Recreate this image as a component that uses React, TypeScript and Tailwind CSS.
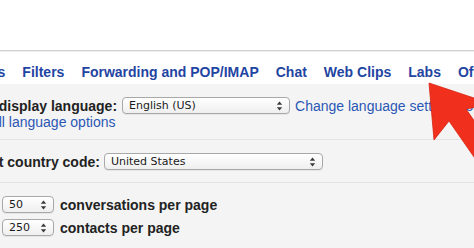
import React from "react";

function Arrows() {
  return (
    <svg width="7" height="10" viewBox="0 0 7 10" className="shrink-0">
      <path d="M3.5 0.5 L6.2 3.8 L0.8 3.8 Z" fill="#3a3a3a" />
      <path d="M3.5 9.5 L6.2 6.2 L0.8 6.2 Z" fill="#3a3a3a" />
    </svg>
  );
}

function Select({ value, className }: { value: string; className: string }) {
  return (
    <div
      className={
        "flex h-[17px] shrink-0 items-center justify-between rounded-[4px] border border-[#a8a8a8] bg-gradient-to-b from-white to-[#efefef] pl-[6px] pr-[6px] shadow-[0_1px_0_rgba(0,0,0,0.06)] " +
        className
      }
    >
      <span className="text-[11px] font-normal leading-[13px] text-[#1a1a1a] [font-family:'DejaVu_Sans',sans-serif]">
        {value}
      </span>
      <Arrows />
    </div>
  );
}

export default function App() {
  const tabs = ["Labels", "Filters", "Forwarding and POP/IMAP", "Chat", "Web Clips", "Labs", "Offline", "Themes"];
  return (
    <div className="relative h-[248px] w-[474px] overflow-hidden bg-white [font-family:'Liberation_Sans',Arial,sans-serif]">
      <div className="h-[50px] bg-white" />
      <div className="h-px bg-[#d2d2d2]" />
      <div className="h-px bg-[#ededed]" />
      <div className="ml-[-39px] flex h-[32px] gap-[17px] whitespace-nowrap bg-white pt-[12px] text-[14px] font-bold leading-[16px] text-[#1f45a2]">
        {tabs.map((t) => (
          <span key={t}>{t}</span>
        ))}
      </div>
      <div className="h-[164px] bg-[#f4f4f4]">
        <div className="border-b border-[#e3e3e3] pb-[9px] pt-[13px]">
          <div className="ml-[-44px] flex h-[17px] items-center whitespace-nowrap text-[14px] leading-[16px]">
            <span className="font-bold text-[#222]">Gmail display language:</span>
            <Select value="English (US)" className="ml-[5px] w-[168px]" />
            <span className="ml-[5px] text-[#2b57b4]">
              Change language settings for other Google products
            </span>
          </div>
          <div className="ml-[-48px] whitespace-nowrap text-[14px] leading-[16px] text-[#2b57b4]">
            Show all language options
          </div>
        </div>
        <div className="border-b border-[#e3e3e3] pb-[12px] pt-[13px]">
          <div className="ml-[-44px] flex h-[17px] items-center whitespace-nowrap text-[14px] leading-[16px]">
            <span className="font-bold text-[#222]">Default country code:</span>
            <Select value="United States" className="ml-[4px] w-[219px]" />
          </div>
        </div>
        <div className="flex flex-col gap-[6px] pt-[13px]">
          <div className="ml-[-44px] flex h-[17px] items-center whitespace-nowrap text-[14px] font-bold leading-[16px] text-[#222]">
            <span className="w-[46px] shrink-0">Show</span>
            <Select value="50" className="w-[52px]" />
            <span className="ml-[6px]">conversations per page</span>
          </div>
          <div className="ml-[-44px] flex h-[17px] items-center whitespace-nowrap text-[14px] font-bold leading-[16px] text-[#222]">
            <span className="w-[46px] shrink-0">Show</span>
            <Select value="250" className="w-[52px]" />
            <span className="ml-[6px]">contacts per page</span>
          </div>
        </div>
      </div>
      <svg
        className="pointer-events-none absolute left-0 top-0"
        width="474"
        height="248"
        viewBox="0 0 474 248"
      >
        <polygon
          points="429,83 434,140 449,121 490,180 507,168 466,109 492,104"
          fill="#f0301d"
          stroke="#d8220f"
          strokeWidth="0.8"
          strokeLinejoin="round"
        />
      </svg>
    </div>
  );
}
